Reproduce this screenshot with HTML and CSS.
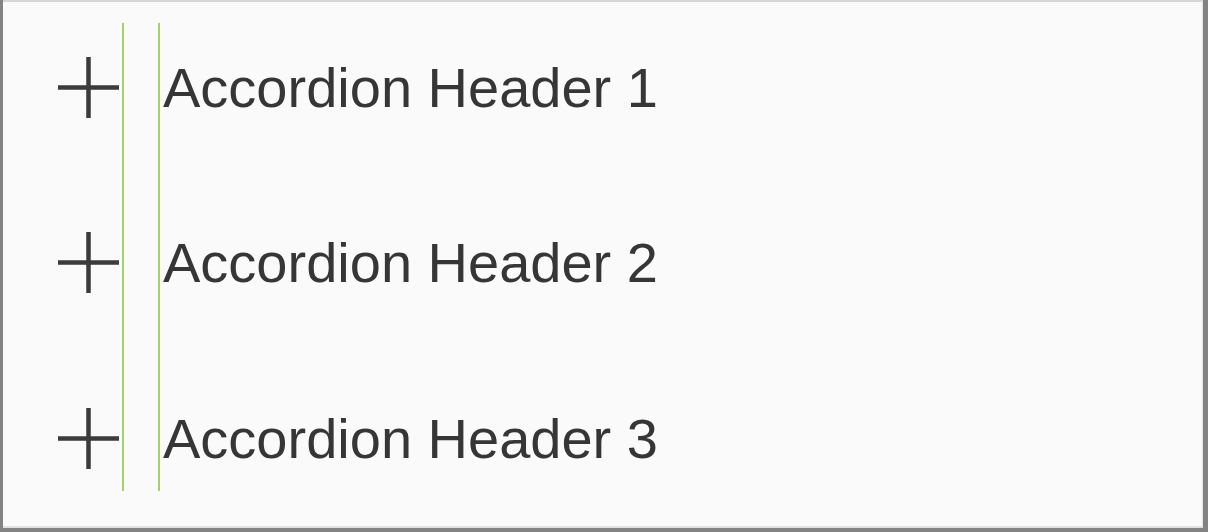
FILE: index.html
```html
<!DOCTYPE html>
<html lang="en">
<head>
  <meta charset="UTF-8">
  <title>Accordion</title>
  <link rel="stylesheet" href="styles.css">
</head>
<body>

  <div class="frame">
    <div class="accordion">
      <!-- guide column between the toggles and the titles -->
      <div class="divider"></div>

      <button class="toggle row-1" aria-label="Expand">
        <svg viewBox="0 0 61 61" width="61" height="61"><path d="M0 30.5H61M30.5 0V61"/></svg>
      </button>
      <div class="title row-1">Accordion Header 1</div>

      <button class="toggle row-2" aria-label="Expand">
        <svg viewBox="0 0 61 61" width="61" height="61"><path d="M0 30.5H61M30.5 0V61"/></svg>
      </button>
      <div class="title row-2">Accordion Header 2</div>

      <button class="toggle row-3" aria-label="Expand">
        <svg viewBox="0 0 61 61" width="61" height="61"><path d="M0 30.5H61M30.5 0V61"/></svg>
      </button>
      <div class="title row-3">Accordion Header 3</div>
    </div>
  </div>

</body>
</html>
```

FILE: styles.css
```css
body {
  margin: 0;
  background: #838383;
  font-family: "Liberation Sans", Arial, sans-serif;
}

.frame {
  margin: 0 5px 0 3px;
  height: 503px;
  background: #fafafa;
  border-top: 2px solid #d6d6d6;
  border-right: 1px solid #e4e4e4;
  border-bottom: 2px solid #e0e0e0;
  padding: 21px 0 0 55px;
  box-sizing: content-box;
}

.accordion {
  display: grid;
  grid-template-columns: 64px 38px auto;
  grid-template-rows: 128px 128px 117px;
  row-gap: 47.5px;
  align-items: start;
}

.divider {
  grid-column: 2;
  grid-row: 1 / -1;
  align-self: stretch;
  border-left: 2px solid #9fd565;
  border-right: 2px solid #9fd565;
}

.toggle {
  grid-column: 1;
  height: 128px;
  display: flex;
  align-items: center;
  padding: 0;
  border: none;
  background: none;
  cursor: pointer;
}

.toggle svg {
  display: block;
  stroke: #3b3b3b;
  stroke-width: 4.5;
  fill: none;
}

.title {
  grid-column: 3;
  height: 128px;
  display: flex;
  align-items: center;
  padding-left: 3px;
  font-size: 56px;
  color: #363636;
  white-space: nowrap;
}

.row-1 { grid-row: 1; }
.row-2 { grid-row: 2; }
.row-3 { grid-row: 3; }
```
